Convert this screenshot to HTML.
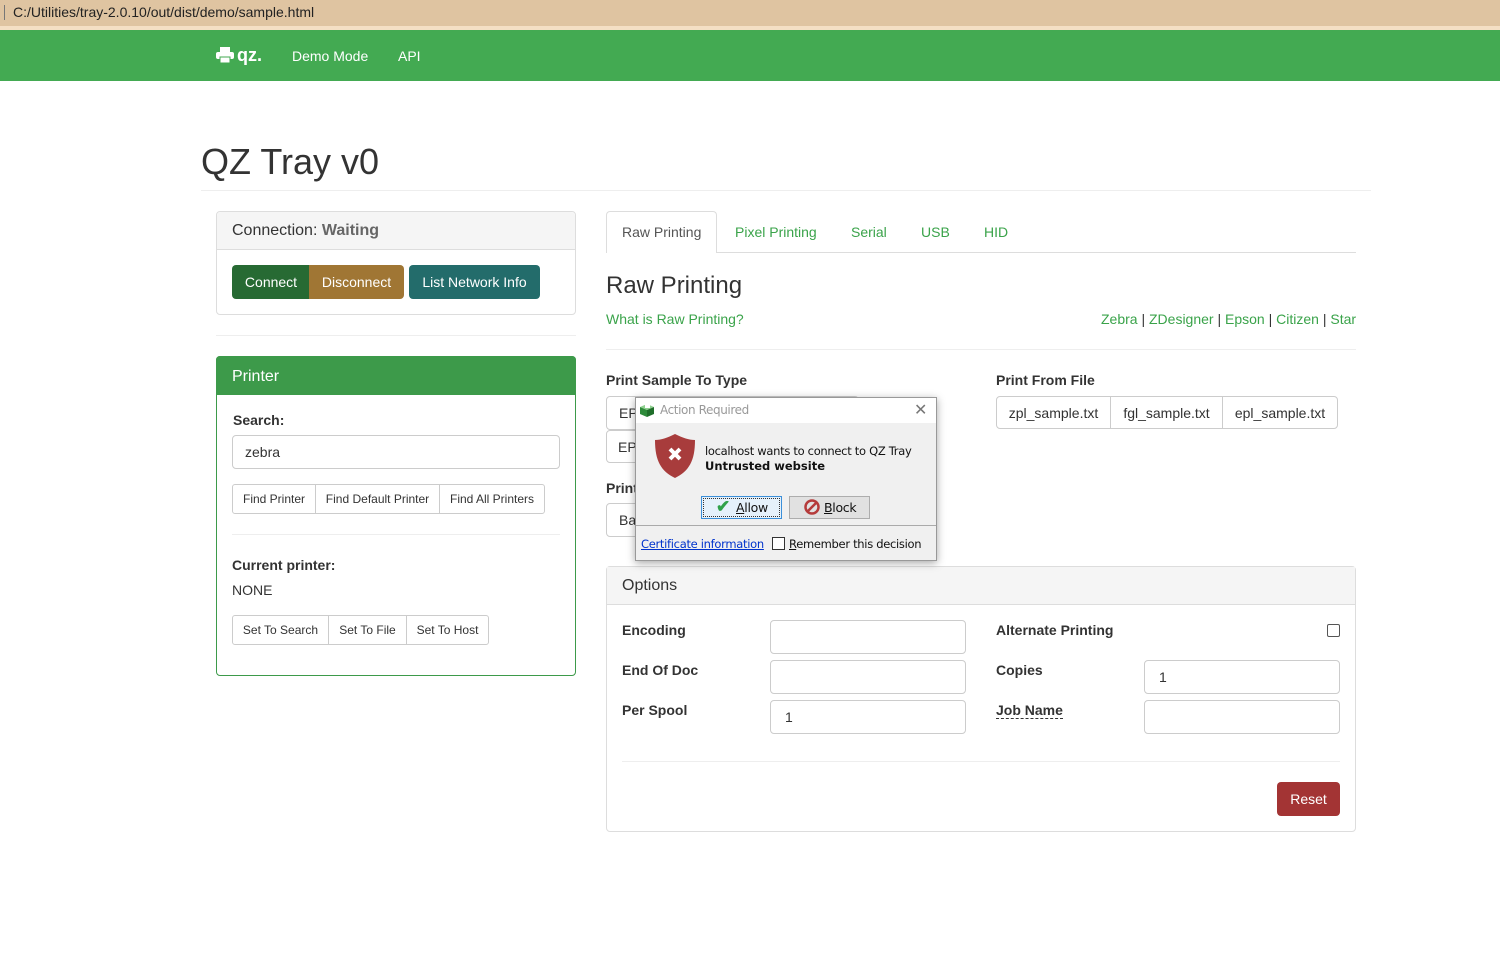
<!DOCTYPE html>
<html><head><style>
*{box-sizing:border-box;margin:0;padding:0}
body{width:1500px;height:973px;position:relative;background:#fff;font-family:"Liberation Sans",sans-serif;font-size:14px;color:#333;overflow:hidden}
.a{position:absolute}
.btn{position:absolute;border:1px solid #ccc;background:#fff;font-size:12px;color:#333;display:flex;align-items:center;justify-content:center}
.inp{position:absolute;border:1px solid #ccc;border-radius:4px;background:#fff;font-size:14px;padding-left:14px;display:flex;align-items:center}
.lbl{position:absolute;font-weight:bold;font-size:14px;color:#333}
.g{color:#3aa34a}
.d{font-family:'DejaVu Sans',sans-serif;font-size:11.5px;letter-spacing:-.3px}
</style></head><body>
<div class="a" style="left:0;top:0;width:1500px;height:26px;background:#dfc4a1"></div>
<div class="a" style="left:0;top:26px;width:1500px;height:4px;background:#f4dfc4"></div>
<div class="a" style="left:4px;top:5px;width:1px;height:15px;background:#777"></div>
<div class="a" style="left:13px;top:4px;font-size:14px;color:#222">C:/Utilities/tray-2.0.10/out/dist/demo/sample.html</div>
<div class="a" style="left:0;top:30px;width:1500px;height:51px;background:#43aa52"></div>
<svg class="a" style="left:216px;top:47px" width="18" height="16" viewBox="0 0 18 16"><rect x="4" y="0" width="10" height="5" fill="#fff"/><rect x="0" y="5" width="18" height="7" rx="2" fill="#fff"/><rect x="4" y="10" width="10" height="6" fill="#fff" stroke="#43aa52" stroke-width="1"/></svg>
<div class="a" style="left:237px;top:45px;font-size:18px;color:#fff;font-weight:bold">qz.</div>
<div class="a" style="left:292px;top:48px;font-size:14px;color:#fff">Demo Mode</div>
<div class="a" style="left:398px;top:48px;font-size:14px;color:#fff">API</div>

<div class="a" style="left:201px;top:141px;font-size:36px;color:#333">QZ Tray v0</div>
<div class="a" style="left:201px;top:190px;width:1170px;height:1px;background:#eee"></div>

<div class="a" style="left:216px;top:211px;width:360px;height:104px;border:1px solid #ddd;border-radius:4px"></div>
<div class="a" style="left:217px;top:212px;width:358px;height:38px;background:#f5f5f5;border-bottom:1px solid #ddd;border-radius:4px 4px 0 0"></div>
<div class="a" style="left:232px;top:222px;font-size:16px;color:#333">Connection: <b style="color:#666">Waiting</b></div>
<div class="a" style="left:232px;top:265px;width:78px;height:34px;background:#276a33;border-radius:4px 0 0 4px;color:#fff;display:flex;align-items:center;justify-content:center">Connect</div>
<div class="a" style="left:309px;top:265px;width:95px;height:34px;background:#a07634;border-radius:0 4px 4px 0;color:#fff;display:flex;align-items:center;justify-content:center">Disconnect</div>
<div class="a" style="left:409px;top:265px;width:131px;height:34px;background:#236c6b;border-radius:4px;color:#fff;display:flex;align-items:center;justify-content:center">List Network Info</div>
<div class="a" style="left:216px;top:335px;width:360px;height:1px;background:#eee"></div>

<div class="a" style="left:216px;top:356px;width:360px;height:320px;border:1px solid #3d9a4a;border-radius:4px"></div>
<div class="a" style="left:216px;top:356px;width:360px;height:39px;background:#3d9a4a;border-radius:4px 4px 0 0"></div>
<div class="a" style="left:232px;top:368px;font-size:16px;color:#fff">Printer</div>
<div class="lbl" style="left:233px;top:412px">Search:</div>
<div class="inp" style="left:232px;top:435px;width:328px;height:34px;padding-left:12px">zebra</div>
<div class="btn" style="left:232px;top:484px;width:84px;height:30px;border-radius:3px 0 0 3px">Find Printer</div>
<div class="btn" style="left:315px;top:484px;width:125px;height:30px">Find Default Printer</div>
<div class="btn" style="left:439px;top:484px;width:106px;height:30px;border-radius:0 3px 3px 0">Find All Printers</div>
<div class="a" style="left:232px;top:534px;width:328px;height:1px;background:#eee"></div>
<div class="lbl" style="left:232px;top:557px">Current printer:</div>
<div class="a" style="left:232px;top:582px">NONE</div>
<div class="btn" style="left:232px;top:615px;width:97px;height:30px;border-radius:3px 0 0 3px">Set To Search</div>
<div class="btn" style="left:328px;top:615px;width:79px;height:30px">Set To File</div>
<div class="btn" style="left:406px;top:615px;width:83px;height:30px;border-radius:0 3px 3px 0">Set To Host</div>

<div class="a" style="left:606px;top:252px;width:750px;height:1px;background:#ddd"></div>
<div class="a" style="left:606px;top:211px;width:111px;height:42px;border:1px solid #ddd;border-bottom:none;border-radius:4px 4px 0 0;background:#fff"></div>
<div class="a" style="left:622px;top:224px;color:#555">Raw Printing</div>
<div class="a g" style="left:735px;top:224px">Pixel Printing</div>
<div class="a g" style="left:851px;top:224px">Serial</div>
<div class="a g" style="left:921px;top:224px">USB</div>
<div class="a g" style="left:984px;top:224px">HID</div>
<div class="a" style="left:606px;top:272px;font-size:24px;color:#333">Raw Printing</div>
<div class="a g" style="left:606px;top:311px">What is Raw Printing?</div>
<div class="a" style="left:1101px;top:311px;color:#333"><span class="g">Zebra</span> | <span class="g">ZDesigner</span> | <span class="g">Epson</span> | <span class="g">Citizen</span> | <span class="g">Star</span></div>
<div class="a" style="left:606px;top:349px;width:750px;height:1px;background:#eee"></div>

<div class="lbl" style="left:606px;top:372px">Print Sample To Type</div>
<div class="btn" style="left:606px;top:396px;width:253px;height:34px;border-radius:4px;font-size:14px;justify-content:flex-start;padding-left:12px">EP</div>
<div class="btn" style="left:606px;top:430px;width:60px;height:33px;border-radius:4px;font-size:14px;justify-content:flex-start;padding-left:11px">EP</div>
<div class="lbl" style="left:606px;top:480px">Print</div>
<div class="btn" style="left:606px;top:503px;width:60px;height:34px;border-radius:4px;font-size:14px;justify-content:flex-start;padding-left:12px">Ba</div>

<div class="lbl" style="left:996px;top:372px">Print From File</div>
<div class="btn" style="left:996px;top:396px;width:115px;height:33px;border-radius:4px 0 0 4px;font-size:14px">zpl_sample.txt</div>
<div class="btn" style="left:1110px;top:396px;width:113px;height:33px;font-size:14px">fgl_sample.txt</div>
<div class="btn" style="left:1222px;top:396px;width:116px;height:33px;border-radius:0 4px 4px 0;font-size:14px">epl_sample.txt</div>

<div class="a" style="left:606px;top:566px;width:750px;height:266px;border:1px solid #ddd;border-radius:4px"></div>
<div class="a" style="left:607px;top:567px;width:748px;height:38px;background:#f5f5f5;border-bottom:1px solid #ddd"></div>
<div class="a" style="left:622px;top:577px;font-size:16px">Options</div>
<div class="lbl" style="left:622px;top:622px">Encoding</div>
<div class="lbl" style="left:622px;top:662px">End Of Doc</div>
<div class="lbl" style="left:622px;top:702px">Per Spool</div>
<div class="inp" style="left:770px;top:620px;width:196px;height:34px"></div>
<div class="inp" style="left:770px;top:660px;width:196px;height:34px"></div>
<div class="inp" style="left:770px;top:700px;width:196px;height:34px">1</div>
<div class="lbl" style="left:996px;top:622px">Alternate Printing</div>
<div class="lbl" style="left:996px;top:662px">Copies</div>
<div class="lbl" style="left:996px;top:702px;border-bottom:1px dashed #333">Job Name</div>
<div class="a" style="left:1327px;top:624px;width:13px;height:13px;border:1px solid #555;border-radius:2px"></div>
<div class="inp" style="left:1144px;top:660px;width:196px;height:34px">1</div>
<div class="inp" style="left:1144px;top:700px;width:196px;height:34px"></div>
<div class="a" style="left:622px;top:761px;width:718px;height:1px;background:#eee"></div>
<div class="a" style="left:1277px;top:782px;width:63px;height:34px;background:#a33434;border-radius:4px;color:#fff;display:flex;align-items:center;justify-content:center">Reset</div>

<div class="a" style="left:635px;top:397px;width:302px;height:164px;background:#f0f0f0;border:1px solid #999;box-shadow:0 2px 8px rgba(0,0,0,.35)"></div>
<div class="a" style="left:636px;top:398px;width:300px;height:25px;background:#fff"></div>
<svg class="a" style="left:639px;top:402px" width="16" height="16" viewBox="0 0 16 16"><path d="M1 5 L8 2 L15 5 L8 8Z" fill="#8fd08f"/><path d="M1 5 L8 8 L8 15 L1 12Z" fill="#2e8b3a"/><path d="M15 5 L8 8 L8 15 L15 12Z" fill="#1f6e2a"/><rect x="6" y="1" width="5" height="5" fill="#fff"/></svg>
<div class="a d" style="left:660px;top:403px;color:#999;font-size:12px;letter-spacing:-.4px">Action Required</div>
<div class="a" style="left:914px;top:400px;font-size:16px;color:#777">✕</div>
<svg class="a" style="left:653px;top:433px" width="44" height="46" viewBox="0 0 44 46"><path d="M22 1 C30 5 36 7 42 7 C42 28 36 38 22 45 C8 38 2 28 2 7 C8 7 14 5 22 1Z" fill="#a83c3c"/><path d="M17 16 L27 26 M27 16 L17 26" stroke="#fff" stroke-width="4"/></svg>
<div class="a d" style="left:705px;top:444px;color:#111">localhost wants to connect to QZ Tray</div>
<div class="a d" style="left:705px;top:459px;color:#111;font-weight:bold;letter-spacing:0">Untrusted website</div>
<div class="a" style="left:701px;top:496px;width:81px;height:23px;border:1px solid #3b8fd9;background:#e5f1fb"></div>
<div class="a" style="left:703px;top:498px;width:77px;height:19px;border:1px dotted #333"></div>
<div class="a" style="left:716px;top:499px;color:#2fa24a;font-size:17px;line-height:16px;font-weight:bold">✔</div>
<div class="a d" style="left:736px;top:500px;font-size:12.5px;color:#111"><u>A</u>llow</div>
<div class="a" style="left:789px;top:496px;width:81px;height:23px;border:1px solid #adadad;background:#e1e1e1"></div>
<svg class="a" style="left:804px;top:499px" width="16" height="16" viewBox="0 0 16 16"><circle cx="8" cy="8" r="6.5" fill="none" stroke="#b53b3b" stroke-width="2.5"/><path d="M4 12 L12 4" stroke="#b53b3b" stroke-width="2.5"/></svg>
<div class="a d" style="left:824px;top:500px;font-size:12.5px;color:#111"><u>B</u>lock</div>
<div class="a" style="left:636px;top:525px;width:300px;height:1px;background:#aaa"></div>
<div class="a d" style="left:641px;top:537px;color:#0033cc;text-decoration:underline">Certificate information</div>
<div class="a" style="left:772px;top:537px;width:13px;height:13px;border:1px solid #333;background:#fff"></div>
<div class="a d" style="left:789px;top:537px;color:#111"><u>R</u>emember this decision</div>
</body></html>
